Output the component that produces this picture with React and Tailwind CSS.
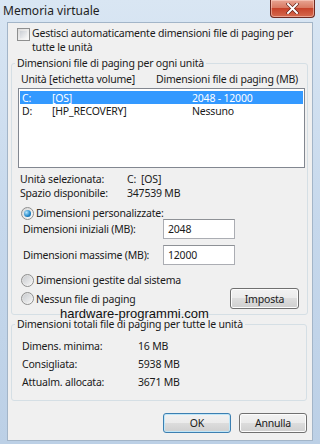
import React from 'react';

function CheckBox() {
  return (
    <span className="mt-[2px] block w-[13px] h-[13px] shrink-0 border border-[#8e8f8f] bg-gradient-to-br from-[#dcdcdc] to-[#fbfbfb] p-[2px]">
      <span className="block w-full h-full bg-gradient-to-br from-[#cbcfd5] to-[#f6f6f6]" />
    </span>
  );
}

function Radio({ checked }) {
  return (
    <span className="flex items-center justify-center w-[13px] h-[13px] shrink-0 rounded-full border border-[#8e8f8f] bg-gradient-to-br from-[#d6d6d6] to-[#fcfcfc]">
      {checked ? (
        <span className="block w-[7px] h-[7px] rounded-full bg-[radial-gradient(circle_at_35%_35%,#b5e6ff,#1c84c7_60%,#0e4f8a)]" />
      ) : (
        <span className="block w-[9px] h-[9px] rounded-full bg-gradient-to-br from-[#c9ccd0] to-[#f4f4f4]" />
      )}
    </span>
  );
}

function Button({ children, primary, className = '' }) {
  return (
    <div
      className={`flex items-center justify-center rounded-[3px] border ${
        primary
          ? 'border-[#3c7fb1] shadow-[inset_0_0_0_1px_#bfe6f8]'
          : 'border-[#707070] shadow-[inset_0_0_0_1px_#fcfcfc]'
      } bg-[linear-gradient(#f2f2f2_0%,#ebebeb_49%,#dddddd_50%,#cfcfcf_100%)] text-[#1a1a1a] ${className}`}
    >
      {children}
    </div>
  );
}

export default function App() {
  return (
    <div
      className="relative w-[320px] h-[444px] overflow-hidden bg-gradient-to-b from-[#d9e6f3] via-[#c6d8ec] to-[#bcd0e6] flex flex-col text-[10.5px] tracking-[-0.2px] leading-[14px] text-[#1a1a1a] whitespace-nowrap"
      style={{ fontFamily: '"Noto Sans", "Open Sans", sans-serif' }}
    >
      {/* barra del titolo */}
      <div className="h-[22px] shrink-0 flex justify-between">
        <span className="pl-[3px] pt-[3px] text-[12px] tracking-normal leading-[15px] text-[#1e1e1e]">Memoria virtuale</span>
        <div className="mr-[5px] w-[45px] h-[18px] rounded-b-[4px] border border-t-0 border-[#6e2a22] bg-[linear-gradient(#e8a493_0%,#d97a63_45%,#c7432b_50%,#d56a4e_100%)] shadow-[inset_0_0_0_1px_rgba(255,220,210,0.5)] flex items-center justify-center">
          <svg width="13" height="11" viewBox="0 0 13 11">
            <path d="M2 1 L11 10 M11 1 L2 10" stroke="#5b1b12" strokeWidth="3.2" strokeLinecap="square" />
            <path d="M2 1 L11 10 M11 1 L2 10" stroke="#ffffff" strokeWidth="2" strokeLinecap="square" />
          </svg>
        </div>
      </div>

      {/* area client */}
      <div className="mx-[7px] h-[419px] border border-[#a3b5c8] bg-[#f0f0f0] flex flex-col">
        <div className="pt-[3px] pl-[9px] flex gap-[2px]">
          <CheckBox />
          <div>
            <div>Gestisci automaticamente dimensioni file di paging per</div>
            <div>tutte le unità</div>
          </div>
        </div>

        <fieldset className="ml-[3px] mr-[4px] mt-[2px] h-[259px] border border-[#d5dfe5] rounded-[3px]">
          <legend className="ml-[3px] px-[2px]">Dimensioni file di paging per ogni unità</legend>
          <div className="mt-[2px] pl-[9px] flex">
            <span className="w-[135px]">Unità [etichetta volume]</span>
            <span>Dimensioni file di paging (MB)</span>
          </div>
          <div className="ml-[6px] mt-[2px] w-[287px] h-[80px] border border-[#828790] bg-white pt-[2px] px-px">
            <div className="h-[13px] flex items-center bg-[#3399ff] text-white">
              <span className="pl-[2px] w-[32px]">C:</span>
              <span className="w-[140px]">[OS]</span>
              <span>2048 - 12000</span>
            </div>
            <div className="h-[13px] flex items-center">
              <span className="pl-[2px] w-[32px]">D:</span>
              <span className="w-[140px]">[HP_RECOVERY]</span>
              <span>Nessuno</span>
            </div>
          </div>

          <div className="mt-[4px] pl-[8px] flex">
            <span className="w-[107px]">Unità selezionata:</span>
            <span>C:&nbsp;&nbsp;[OS]</span>
          </div>
          <div className="pl-[8px] flex">
            <span className="w-[107px]">Spazio disponibile:</span>
            <span>347539 MB</span>
          </div>

          <div className="mt-[6px] pl-[9px] h-[14px] flex items-center gap-[2px]">
            <Radio checked />
            <span>Dimensioni personalizzate:</span>
          </div>
          <div className="-mt-px pl-[11px] h-[20px] flex items-center">
            <span className="w-[140px]">Dimensioni iniziali (MB):</span>
            <div className="w-[72px] h-[20px] border border-[#abadb3] border-t-[#8e9196] bg-white pl-[4px] flex items-center">2048</div>
          </div>
          <div className="mt-[6px] pl-[11px] h-[20px] flex items-center">
            <span className="w-[140px]">Dimensioni massime (MB):</span>
            <div className="w-[72px] h-[20px] border border-[#abadb3] border-t-[#8e9196] bg-white pl-[4px] flex items-center">12000</div>
          </div>

          <div className="mt-[8px] pl-[9px] h-[14px] flex items-center gap-[2px]">
            <Radio />
            <span>Dimensioni gestite dal sistema</span>
          </div>
          <div className="mt-px pl-[9px] pr-[8px] h-[21px] flex items-center justify-between">
            <div className="flex items-center gap-[2px]">
              <Radio />
              <span>Nessun file di paging</span>
            </div>
            <Button className="w-[69px] h-[21px]">Imposta</Button>
          </div>
        </fieldset>

        <fieldset className="ml-[3px] mr-[5px] mt-[2px] h-[84px] border border-[#d5dfe5] rounded-[3px]">
          <legend className="ml-[3px] px-[2px]">Dimensioni totali file di paging per tutte le unità</legend>
          <div className="mt-[8px] pl-[10px] flex flex-col gap-[4px]">
            <div className="flex">
              <span className="w-[116px]">Dimens. minima:</span>
              <span>16 MB</span>
            </div>
            <div className="flex">
              <span className="w-[116px]">Consigliata:</span>
              <span>5938 MB</span>
            </div>
            <div className="flex">
              <span className="w-[116px]">Attualm. allocata:</span>
              <span>3671 MB</span>
            </div>
          </div>
        </fieldset>

        <div className="mt-[12px] pr-[5px] flex justify-end gap-[8px]">
          <Button primary className="w-[68px] h-[20px]">OK</Button>
          <Button className="w-[68px] h-[20px]">Annulla</Button>
        </div>
      </div>

      {/* filigrana */}
      <div
        className="absolute left-[60px] top-[305px] text-[13px] tracking-normal leading-[17px] text-[#111]"
        style={{ fontFamily: '"Liberation Sans", Arial, sans-serif' }}
      >
        hardware-programmi.com
      </div>
    </div>
  );
}
